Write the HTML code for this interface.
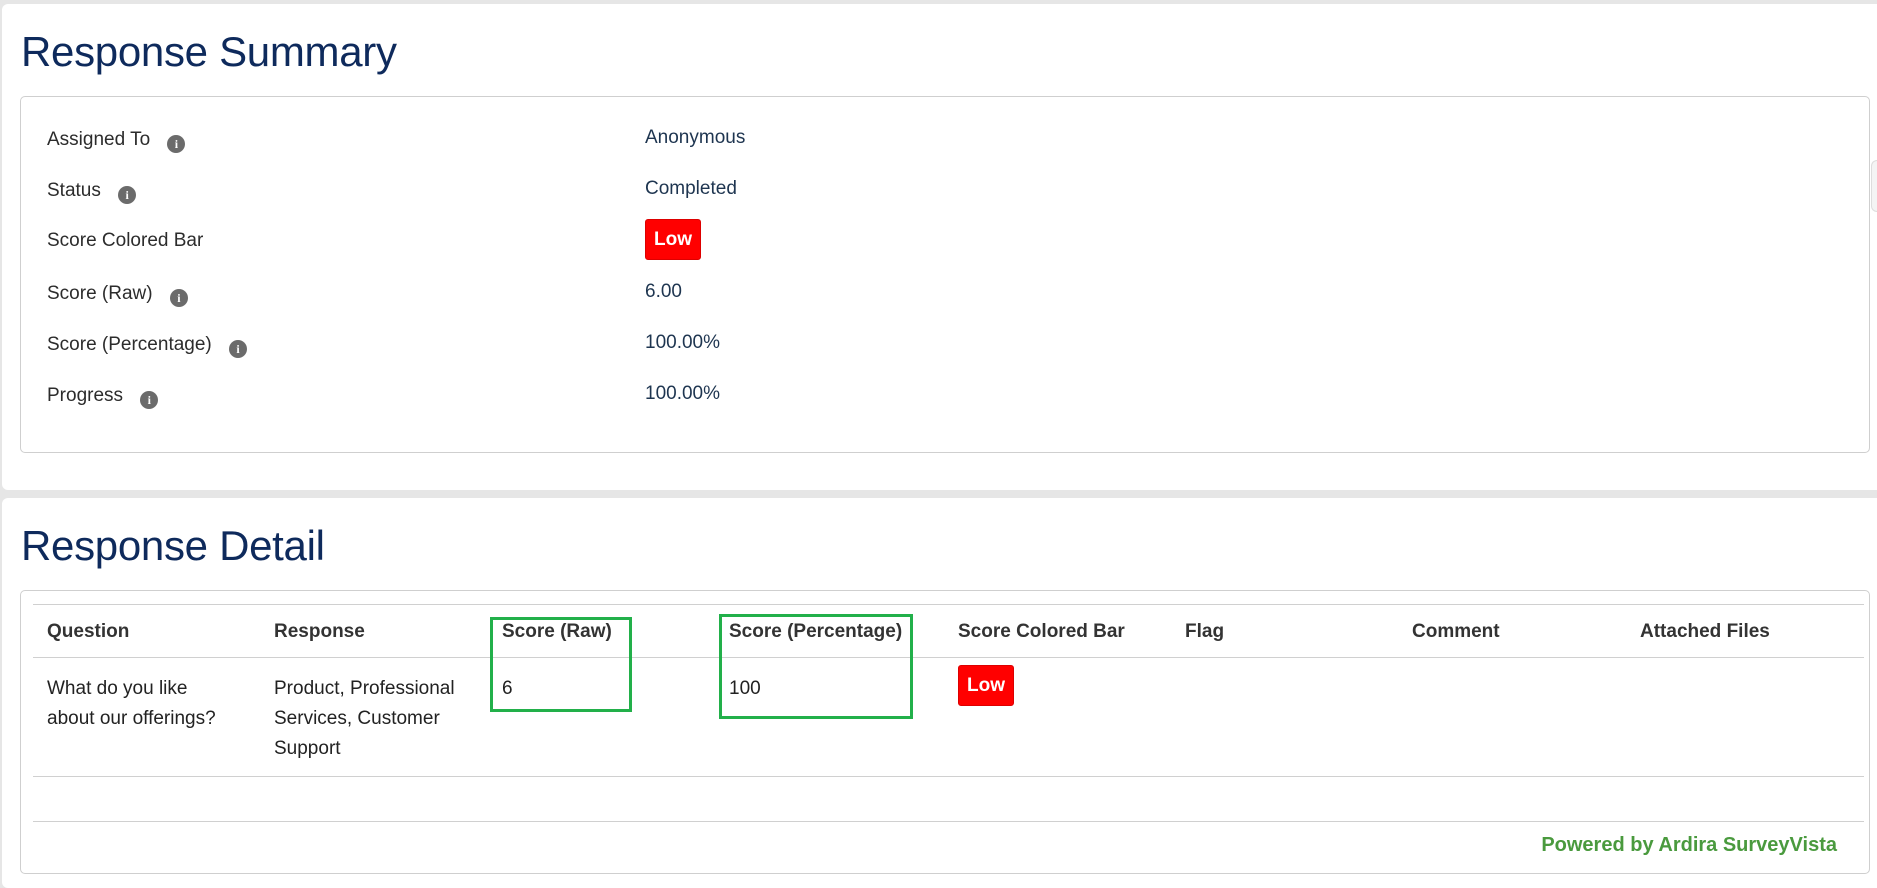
<!DOCTYPE html>
<html><head><meta charset="utf-8"><style>
*{box-sizing:border-box;margin:0;padding:0}
body{width:1877px;height:882px;background:#e6e6e6;font-family:"Liberation Sans",sans-serif;position:relative;overflow:hidden}
.card{position:absolute;left:2px;right:0;background:#fff;border-radius:6px 0 0 6px}
.h{position:absolute;left:21px;font-size:42px;color:#0e2a5c;font-weight:normal;letter-spacing:-0.3px}
.box{position:absolute;left:20px;width:1850px;border:1px solid #cfcfcf;border-radius:5px;background:#fff}
.lab{position:absolute;left:47px;font-size:19px;color:#2c2c2c}
.val{position:absolute;left:645px;font-size:19px;color:#1e3550}
.i{display:inline-block;width:18px;height:18px;border-radius:50%;background:#6b6b6b;color:#fff;font-size:12px;font-weight:bold;text-align:center;line-height:18px;font-family:"Liberation Serif",serif;vertical-align:-3px;margin-left:12px}
.low{position:absolute;background:#f00;color:#fff;font-weight:bold;font-size:19px;border-radius:3px;border:1px solid #d00;text-align:center}
.line{position:absolute;left:33px;width:1831px;height:1px;background:#d0d0d0}
.th{position:absolute;top:621px;font-size:19px;font-weight:bold;color:#333}
.td{position:absolute;top:674px;font-size:19px;color:#222;line-height:30px}
.g{position:absolute;border:3px solid #22b04a}
</style></head><body>
<div class="card" style="top:4px;height:486px">
</div>
<div class="h" style="top:28px">Response Summary</div>
<div class="box" style="top:96px;height:357px"></div>
<div style="position:absolute;left:1871px;top:160px;width:8px;height:52px;border:1px solid #ddd;border-right:none;border-radius:6px 0 0 6px;background:#f4f4f4"></div>
<div class="lab" style="top:129px">Assigned To <span class="i">i</span></div>
<div class="lab" style="top:180px">Status <span class="i">i</span></div>
<div class="lab" style="top:230px">Score Colored Bar</div>
<div class="lab" style="top:283px">Score (Raw) <span class="i">i</span></div>
<div class="lab" style="top:334px">Score (Percentage) <span class="i">i</span></div>
<div class="lab" style="top:385px">Progress <span class="i">i</span></div>
<div class="val" style="top:127px">Anonymous</div>
<div class="val" style="top:178px">Completed</div>
<div class="low" style="left:645px;top:219px;width:56px;height:41px;line-height:39px">Low</div>
<div class="val" style="top:281px">6.00</div>
<div class="val" style="top:332px">100.00%</div>
<div class="val" style="top:383px">100.00%</div>

<div class="card" style="top:498px;height:390px"></div>
<div class="h" style="top:522px">Response Detail</div>
<div class="box" style="top:590px;height:284px"></div>
<div class="line" style="top:604px"></div>
<div class="line" style="top:657px"></div>
<div class="line" style="top:776px"></div>
<div class="line" style="top:821px"></div>
<div class="th" style="left:47px">Question</div>
<div class="th" style="left:274px">Response</div>
<div class="th" style="left:502px">Score (Raw)</div>
<div class="th" style="left:729px">Score (Percentage)</div>
<div class="th" style="left:958px">Score Colored Bar</div>
<div class="th" style="left:1185px">Flag</div>
<div class="th" style="left:1412px">Comment</div>
<div class="th" style="left:1640px">Attached Files</div>
<div class="td" style="left:47px">What do you like<br>about our offerings?</div>
<div class="td" style="left:274px">Product, Professional<br>Services, Customer<br>Support</div>
<div class="td" style="left:502px">6</div>
<div class="td" style="left:729px">100</div>
<div class="low" style="left:958px;top:665px;width:56px;height:41px;line-height:39px">Low</div>
<div class="g" style="left:490px;top:617px;width:142px;height:95px"></div>
<div class="g" style="left:719px;top:614px;width:194px;height:105px"></div>
<div style="position:absolute;right:40px;top:834px;font-size:20px;font-weight:bold;color:#4a9a3e">Powered by Ardira SurveyVista</div>
</body></html>
